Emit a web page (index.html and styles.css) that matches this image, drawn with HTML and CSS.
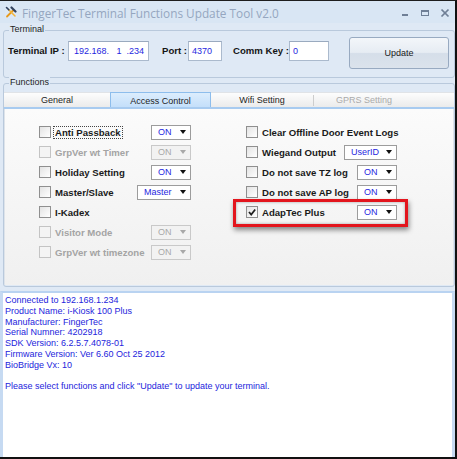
FILE: index.html
```html
<!DOCTYPE html>
<html>
<head>
<meta charset="utf-8">
<title>FingerTec Terminal Functions Update Tool v2.0</title>
<link rel="stylesheet" href="styles.css">
</head>
<body>
<div class="window">
  <div class="titlebar">
    <svg class="appicon" width="12" height="12" viewBox="0 0 12 12">
      <rect x="0" y="0" width="12" height="12" rx="1" fill="#dce8f6"/>
      <line x1="2" y1="10.5" x2="8.5" y2="4" stroke="#e89a1c" stroke-width="1.8" stroke-linecap="round"/>
      <line x1="6.5" y1="1.5" x2="10.5" y2="5.5" stroke="#34445f" stroke-width="2.2" stroke-linecap="round"/>
      <line x1="3.5" y1="3.5" x2="10" y2="10" stroke="#f2b43a" stroke-width="1.5" stroke-linecap="round"/>
      <line x1="1.5" y1="1.5" x2="3.8" y2="3.8" stroke="#2f3f5c" stroke-width="1.6" stroke-linecap="round"/>
    </svg>
    <span class="title">FingerTec Terminal Functions Update Tool v2.0</span>
    <div class="controls">
      <svg width="10" height="10" viewBox="0 0 10 10"><line x1="2" y1="7" x2="8" y2="7" stroke="#6f7f96" stroke-width="2"/></svg>
      <svg width="10" height="10" viewBox="0 0 10 10"><rect x="1.5" y="2.5" width="7" height="5" fill="none" stroke="#6f7f96" stroke-width="1"/><line x1="1.5" y1="3" x2="8.5" y2="3" stroke="#6f7f96" stroke-width="2"/></svg>
      <svg width="10" height="10" viewBox="0 0 10 10"><line x1="1.5" y1="1.5" x2="8.5" y2="8.5" stroke="#6f7f96" stroke-width="1.7"/><line x1="8.5" y1="1.5" x2="1.5" y2="8.5" stroke="#6f7f96" stroke-width="1.7"/></svg>
    </div>
  </div>

  <div class="client">
    <div class="group terminal">
      <span class="legend">Terminal</span>
      <div class="term-row">
        <span class="tlabel l-ip">Terminal IP :</span>
        <span class="tbox b-ip">192.168.   1  .234</span>
        <span class="tlabel l-port">Port :</span>
        <span class="tbox b-port">4370</span>
        <span class="tlabel l-comm">Comm Key :</span>
        <span class="tbox b-comm">0</span>
        <button class="update">Update</button>
      </div>
    </div>

    <div class="group functions">
      <span class="legend">Functions</span>
      <div class="tabs">
        <div class="tab t-general">General</div>
        <div class="tab t-access active">Access Control</div>
        <div class="tab t-wifi">Wifi Setting</div>
        <div class="tab t-gprs disabled">GPRS Setting</div>
      </div>
      <div class="panel">
        <div class="col left">
          <div class="row"><span class="cb"></span><span class="lbl focus">Anti Passback</span><span class="dd w40">ON<span class="arr"></span></span></div>
          <div class="row off"><span class="cb"></span><span class="lbl">GrpVer wt Timer</span><span class="dd w40">ON<span class="arr"></span></span></div>
          <div class="row"><span class="cb"></span><span class="lbl">Holiday Setting</span><span class="dd w40">ON<span class="arr"></span></span></div>
          <div class="row"><span class="cb"></span><span class="lbl">Master/Slave</span><span class="dd w54">Master<span class="arr"></span></span></div>
          <div class="row"><span class="cb"></span><span class="lbl">I-Kadex</span></div>
          <div class="row off"><span class="cb"></span><span class="lbl">Visitor Mode</span><span class="dd w40">ON<span class="arr"></span></span></div>
          <div class="row off"><span class="cb"></span><span class="lbl">GrpVer wt timezone</span><span class="dd w40">ON<span class="arr"></span></span></div>
        </div>
        <div class="col right">
          <div class="row"><span class="cb"></span><span class="lbl">Clear Offline Door Event Logs</span></div>
          <div class="row"><span class="cb"></span><span class="lbl">Wiegand Output</span><span class="dd w53">UserID<span class="arr"></span></span></div>
          <div class="row"><span class="cb"></span><span class="lbl">Do not save TZ log</span><span class="dd w40">ON<span class="arr"></span></span></div>
          <div class="row"><span class="cb"></span><span class="lbl">Do not save AP log</span><span class="dd w40">ON<span class="arr"></span></span></div>
          <div class="row"><span class="cb checked"><svg width="10" height="10" viewBox="0 0 10 10"><path d="M2 5 L4.2 7.6 L8.2 2.4" fill="none" stroke="#1e1e1e" stroke-width="1.7"/></svg></span><span class="lbl">AdapTec Plus</span><span class="dd w40">ON<span class="arr"></span></span></div>
        </div>
        <div class="highlight"></div>
      </div>
    </div>

    <div class="log">
      <div>Connected to 192.168.1.234</div>
      <div>Product Name: i-Kiosk 100 Plus</div>
      <div>Manufacturer: FingerTec</div>
      <div>Serial Numner: 4202918</div>
      <div>SDK Version: 6.2.5.7.4078-01</div>
      <div>Firmware Version: Ver 6.60 Oct 25 2012</div>
      <div>BioBridge Vx: 10</div>
      <div>&nbsp;</div>
      <div>Please select functions and click "Update" to update your terminal.</div>
    </div>
  </div>
</div>
</body>
</html>
```

FILE: styles.css
```css
* { box-sizing: border-box; }
html, body { margin: 0; padding: 0; }
body {
  width: 457px;
  height: 459px;
  overflow: hidden;
  background: #ffffff;
  font-family: "Liberation Sans", Arial, sans-serif;
}

.window {
  width: 457px;
  height: 459px;
  display: flex;
  flex-direction: column;
  background: #dfe9f5;
  border-top: 1px solid #1e1e1e;
  border-right: 2px solid #111111;
  border-bottom: 2px solid #111111;
}

/* title bar */
.titlebar {
  flex: none;
  height: 22px;
  display: flex;
  align-items: center;
  padding-left: 5px;
  background: #d9e6f4;
}
.appicon { flex: none; }
.title {
  margin-left: 5px;
  font-family: "Open Sans", "Liberation Sans", sans-serif;
  font-size: 11.8px;
  color: #95a6c0;
  white-space: nowrap;
  padding-top: 2px;
}
.controls {
  margin-left: auto;
  display: flex;
  gap: 10px;
  padding-right: 5px;
  padding-top: 2px;
}

/* client area */
.client {
  flex: 1;
  display: flex;
  flex-direction: column;
}

.group {
  position: relative;
  border: 1px solid #b9c9dc;
  border-radius: 3px;
  margin-left: 3px;
}
.legend {
  position: absolute;
  top: -8px;
  left: 5px;
  padding: 0 1px;
  background: #dfe9f5;
  font-size: 9px;
  line-height: 12px;
  color: #1e1e1e;
}

/* terminal group */
.terminal {
  margin-top: 7px;
  height: 48px;
}
.term-row {
  display: flex;
  align-items: flex-start;
  padding: 6px 0 0 4px;
}
.tlabel {
  margin-top: 4px;
  font-size: 9.6px;
  font-weight: bold;
  line-height: 20px;
  color: #141414;
  white-space: nowrap;
}
.tbox {
  margin-top: 4px;
  height: 20px;
  background: #ffffff;
  border: 1px solid #abbacd;
  border-top-color: #9aaabf;
  font-size: 9px;
  line-height: 18px;
  color: #1f1fe0;
  padding-left: 3px;
  white-space: pre;
}
.l-ip { width: 60px; }
.b-ip { width: 81px; padding-left: 5px; }
.l-port { width: 26px; margin-left: 13px; }
.b-port { width: 34px; }
.l-comm { width: 56px; margin-left: 11px; }
.b-comm { width: 40px; }
.update {
  margin-left: 20px;
  width: 100px;
  height: 32px;
  padding: 0;
  border: 1px solid #98aac1;
  border-radius: 3px;
  background: linear-gradient(#f3f6fa 0%, #e6ecf3 48%, #d5dee9 52%, #dbe3ec 100%);
  font-family: "Liberation Sans", Arial, sans-serif;
  font-size: 9px;
  color: #1a1a1a;
}

/* functions group */
.functions {
  margin-top: 5px;
  padding-top: 8px;
  padding-bottom: 1px;
}
.tabs {
  display: flex;
  height: 17px;
  background: linear-gradient(#fdfdfd, #ebebeb);
  border-top: 1px solid #e0e3e7;
  border-bottom: 2px solid #a8cbf0;
}
.tab {
  height: 14px;
  padding-top: 1px;
  font-size: 9px;
  line-height: 13px;
  text-align: center;
  color: #1e1e1e;
  white-space: nowrap;
}
.t-general { width: 106px; }
.t-access { width: 101px; }
.t-wifi { width: 102px; }
.t-gprs { width: 101px; }
.tab.active {
  margin-top: -1px;
  height: 15px;
  padding-top: 2px;
  background: linear-gradient(#dcedfd, #c4dffa);
  border: 1px solid #8dbdec;
  border-bottom: none;
}
.tab.disabled {
  color: #aaaaaa;
  border-left: 1px solid #cdcdcd;
  margin-top: 2px;
  height: 11px;
  padding-top: 0;
  line-height: 11px;
}

.panel {
  position: relative;
  height: 176px;
  display: flex;
  gap: 55px;
  padding: 13px 0 0 34px;
  background: linear-gradient(#fbfbfb, #f0f0f0);
  border-left: 1px solid #dde3ea;
  border-right: 1px solid #dde3ea;
}
.col {
  display: flex;
  flex-direction: column;
}
.col.left { width: 152px; }
.col.right { width: 151px; }
.row {
  height: 20px;
  display: flex;
  align-items: center;
}
.cb {
  flex: none;
  width: 12px;
  height: 12px;
  border: 1px solid #8f8f8f;
  background: linear-gradient(135deg, #e3e3e3, #ffffff);
  display: flex;
  align-items: center;
  justify-content: center;
}
.lbl {
  margin-left: 4px;
  font-size: 9.6px;
  font-weight: bold;
  color: #1a1a1a;
  white-space: nowrap;
  line-height: 11px;
}
.lbl.focus {
  margin-left: 3px;
  padding: 0 1px;
  outline: 1px dotted #444444;
}
.dd {
  margin-left: auto;
  height: 15px;
  display: flex;
  align-items: center;
  padding-left: 6px;
  padding-right: 4px;
  background: #ffffff;
  border: 1px solid #9c9c9c;
  font-size: 9px;
  color: #1f1fe0;
  white-space: nowrap;
}
.dd .arr {
  margin-left: auto;
  width: 0;
  height: 0;
  border-left: 3px solid transparent;
  border-right: 3px solid transparent;
  border-top: 4px solid #111111;
}
.w40 { width: 40px; }
.w53 { width: 53px; }
.w54 { width: 54px; }

.row.off .cb { border-color: #c4c4c4; background: #f4f4f4; }
.row.off .lbl { color: #a4a4a4; }
.row.off .dd { background: #f2f2f2; border-color: #c9c9c9; color: #a8a8a8; }
.row.off .dd .arr { border-top-color: #a8a8a8; }

.highlight {
  position: absolute;
  left: 228px;
  top: 90px;
  width: 175px;
  height: 28px;
  border: 3px solid #e3151d;
  box-shadow: 1px 3px 5px rgba(0, 0, 0, 0.45), inset 0 0 3px rgba(0, 0, 0, 0.35);
}

/* log */
.log {
  flex: 1;
  margin-top: 4px;
  background: #ffffff;
  border-top: 2px solid #b9d3f1;
  border-left: 3px solid #c6daf2;
  border-right: 3px solid #c6daf2;
  padding: 2px 0 0 2px;
  font-size: 9px;
  line-height: 10.8px;
  color: #2424dc;
  white-space: nowrap;
}
```
